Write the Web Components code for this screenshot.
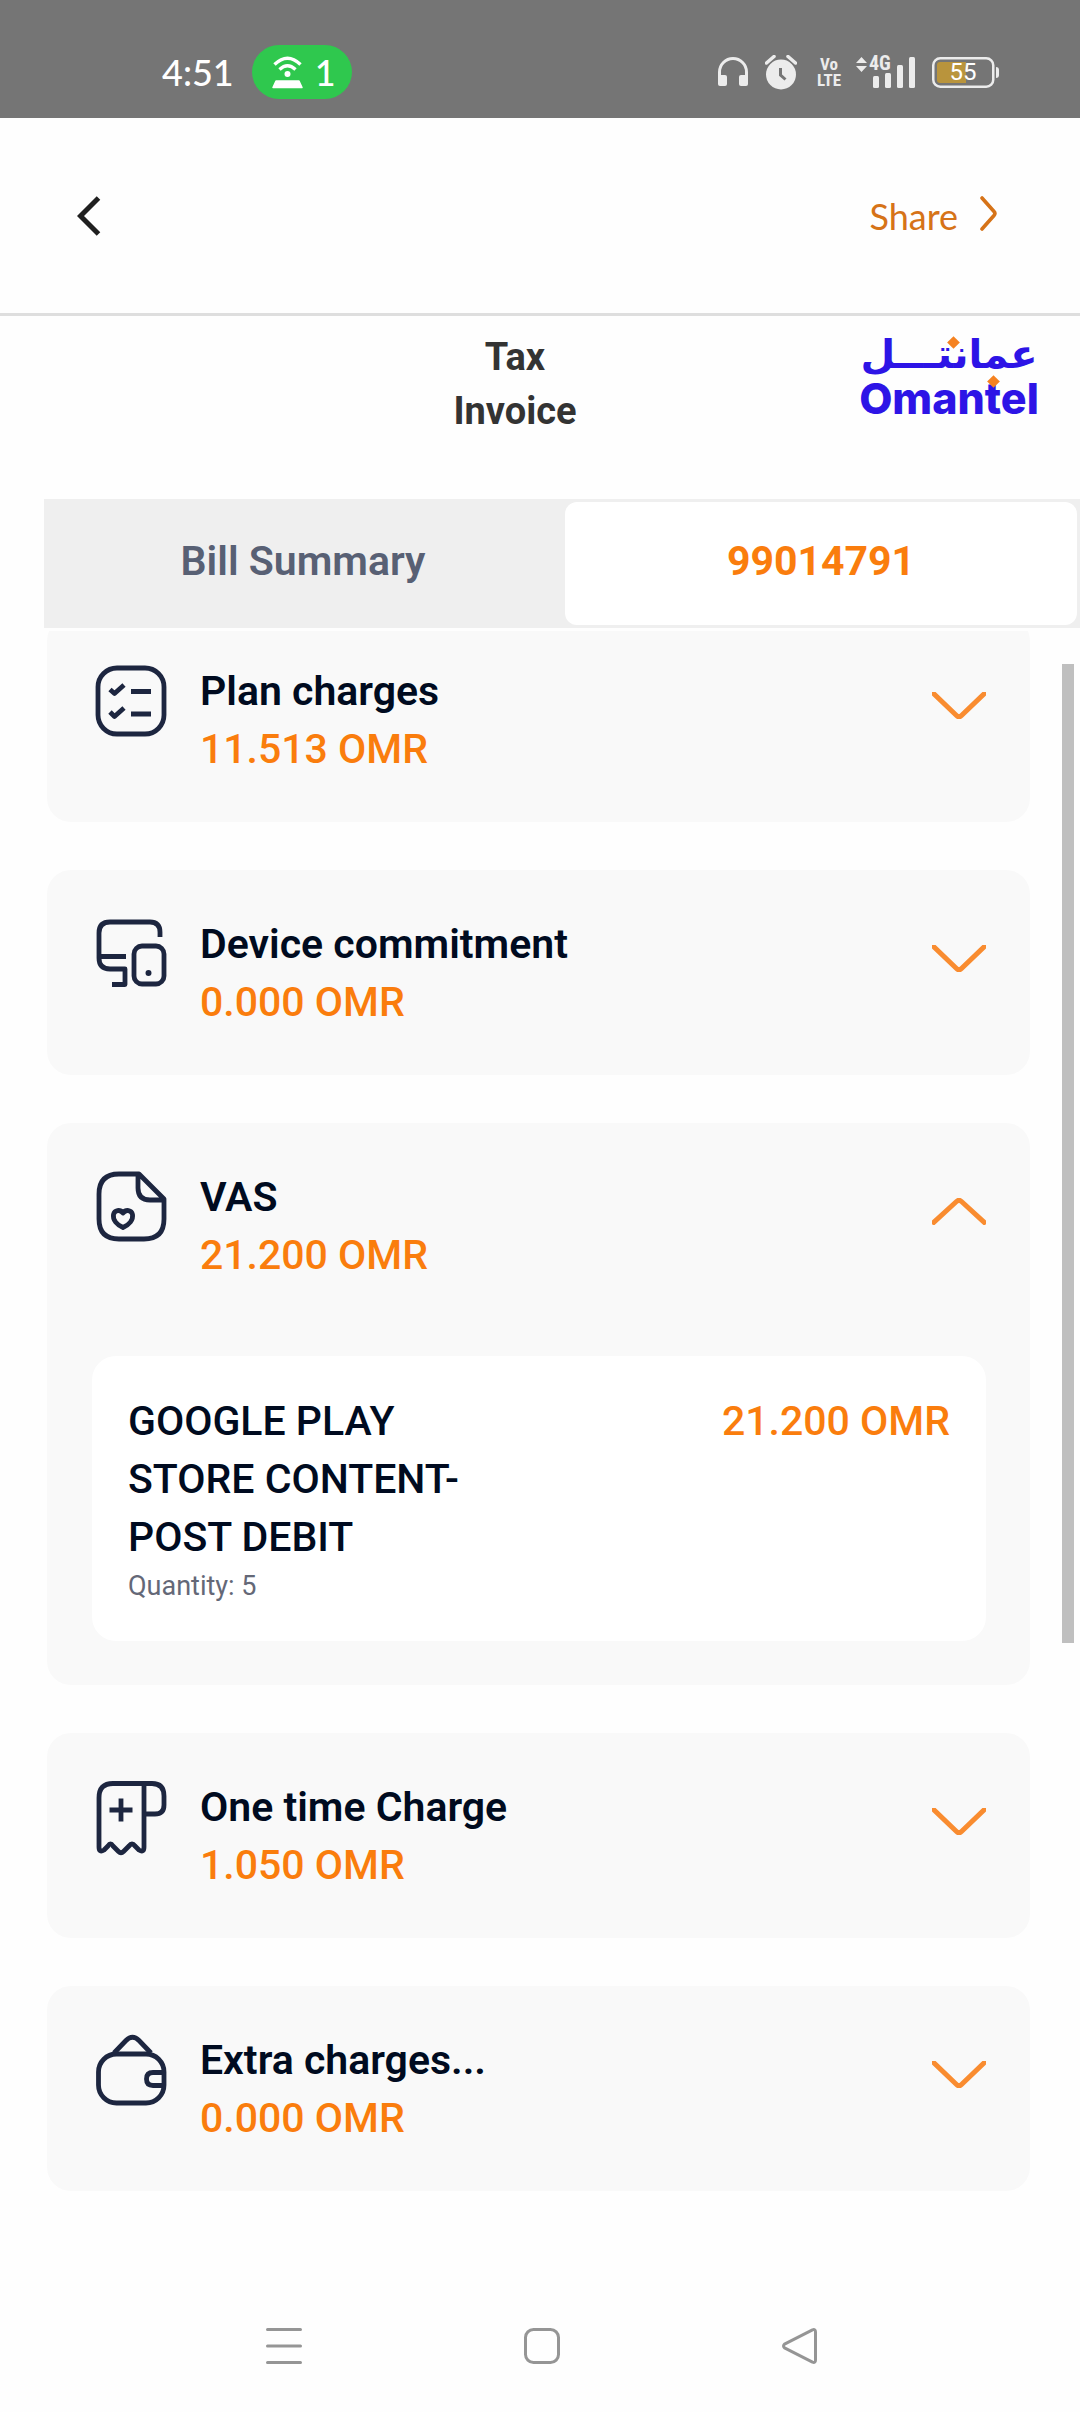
<!DOCTYPE html>
<html lang="en">
<head>
<meta charset="utf-8">
<meta name="viewport" content="width=device-width, initial-scale=1">
<title>Tax Invoice</title>
<style>
  html, body { margin: 0; height: 100%; }
  body {
    --accent: #fa7d0d;
    --ink: #000b20;
    --card: #f9f9f9;
    background: #fefefe;
    font-family: Roboto, "Liberation Sans", sans-serif;
  }
</style>
</head>
<body>
<invoice-app>
  <status-bar slot="status"></status-bar>
  <app-header slot="header"></app-header>
  <brand-heading slot="header"></brand-heading>
  <bill-tabs slot="header"></bill-tabs>
  <charge-card icon="plan" heading="Plan charges" amount="11.513 OMR"></charge-card>
  <charge-card icon="device" heading="Device commitment" amount="0.000 OMR"></charge-card>
  <charge-card icon="vas" heading="VAS" amount="21.200 OMR" open>
    <charge-item name="GOOGLE PLAY STORE CONTENT-POST DEBIT" amount="21.200 OMR" quantity="5"></charge-item>
  </charge-card>
  <charge-card icon="receipt" heading="One time Charge" amount="1.050 OMR"></charge-card>
  <charge-card icon="wallet" heading="Extra charges..." amount="0.000 OMR"></charge-card>
  <nav-bar slot="nav"></nav-bar>
</invoice-app>

<script>
const BASE = `
  :host, *, *::before { box-sizing: border-box; }
  button { margin: 0; padding: 0; border: 0; background: none; font: inherit; color: inherit; text-align: inherit; cursor: pointer; }
  svg { display: block; flex: none; }
`;
function define(name, render) {
  customElements.define(name, class extends HTMLElement {
    connectedCallback() {
      if (this.shadowRoot) return;
      const root = this.attachShadow({ mode: 'open' });
      const t = document.createElement('template');
      t.innerHTML = render(this);
      root.append(t.content.cloneNode(true));
    }
  });
}

define('invoice-app', () => `<style>${BASE}
  :host { display: flex; flex-direction: column; min-height: 100%; }
  .body { flex: 1; display: flex; margin-top: 3px; overflow: hidden; }
  main { flex: 1; display: flex; flex-direction: column; gap: 48px; margin: -14px 32px 0 47px; padding-bottom: 48px; }
  .track { width: 12px; margin-right: 6px; padding-top: 33px; }
  .thumb { height: 979px; background: #bfbfbf; }
</style>
<slot name="status"></slot>
<slot name="header"></slot>
<div class="body"><main><slot></slot></main><div class="track"><div class="thumb"></div></div></div>
<slot name="nav"></slot>`);

define('status-bar', () => `<style>${BASE}
  :host { display: flex; justify-content: space-between; align-items: center; height: 118px; padding: 26px 81px 0 162px; background: #757575; color: #fff; }
  .left, .right { display: flex; align-items: center; }
  .left { gap: 18px; font: 500 36px/54px Lato, sans-serif; }
  .pill { display: flex; align-items: center; gap: 12px; height: 54px; padding: 0 16px 0 20px; border-radius: 27px; background: #2fc84e; }
  .right { color: #ececec; }
  .head { margin-right: 17px; }
  .alarm { margin-right: 20px; }
  .volte { margin-right: 15px; font: bold 17px/16px "Liberation Sans Narrow", "Roboto Condensed", Roboto, sans-serif; text-align: center; }
  .sig { position: relative; margin-right: 16px; }
  .sig span { position: absolute; left: 13px; top: 0; font: bold 20px/15px "Liberation Sans Narrow", "Roboto Condensed", Roboto, sans-serif; }
  .bat { position: relative; }
  .bat span { position: absolute; left: 0; top: 0; width: 62px; text-align: center; font: 24px/31px Roboto, sans-serif; color: #fff; }
</style>
<div class="left"><span>4:51</span>
  <span class="pill">
    <svg width="31" height="33" viewBox="0 0 31 33" fill="none" stroke="#fff" stroke-width="3.4">
      <path d="M2.5 8.5Q15.500 -4 28.500 8.500M7.500 13.500Q15.500 6 23.500 13.500"/>
      <circle cx="15.500" cy="18" r="3" fill="#fff" stroke="none"/>
      <path d="M4 25H27L30 31.500H1Z" fill="#fff" stroke="#fff" stroke-width="1.500" stroke-linejoin="round"/>
    </svg><span>1</span></span>
</div>
<div class="right">
  <svg class="head" width="30" height="30" viewBox="0 0 30 30" fill="none" stroke="currentColor" stroke-width="3">
    <path d="M1.500 22V15A13.500 13.500 0 0 1 28.500 15V22"/><rect x="0" y="18" width="9" height="11" rx="2" fill="currentColor" stroke="none"/><rect x="21" y="18" width="9" height="11" rx="2" fill="currentColor" stroke="none"/>
  </svg>
  <svg class="alarm" width="32" height="35" viewBox="0 0 32 35">
    <circle cx="16" cy="19.500" r="15" fill="currentColor"/>
    <path d="M1.500 8L9 1.500M30.500 8L23 1.500" stroke="currentColor" stroke-width="3.500" stroke-linecap="round"/>
    <path d="M15.500 13V20L20.500 24.500" fill="none" stroke="#757575" stroke-width="3"/>
  </svg>
  <div class="volte">Vo<br>LTE</div>
  <div class="sig"><svg width="60" height="32" viewBox="0 0 60 32" fill="currentColor">
    <path d="M0 7L5.500 1L11 7ZM0 10H11L5.500 16Z"/>
    <rect x="17" y="20" width="6" height="12" rx="1.500"/><rect x="29" y="17" width="6" height="15" rx="1.500"/><rect x="41" y="9" width="6" height="23" rx="1.500"/><rect x="53" y="1" width="6" height="31" rx="1.500"/>
  </svg><span>4G</span></div>
  <div class="bat"><svg width="67" height="31" viewBox="0 0 67 31">
    <rect x="1.250" y="1.250" width="60" height="28.500" rx="7" fill="none" stroke="currentColor" stroke-width="2.500"/>
    <path d="M8 5H34V26H8Q5 26 5 23V8Q5 5 8 5Z" fill="#b9943c"/>
    <path d="M64 10Q67 10 67 13V18Q67 21 64 21Z" fill="currentColor"/>
  </svg><span>55</span></div>
</div>`);

define('app-header', () => `<style>${BASE}
  :host { display: flex; justify-content: space-between; align-items: center; height: 198px; padding: 0 83px 0 77px; border-bottom: 3px solid #dedede; }
  .share { display: flex; align-items: flex-start; gap: 22px; color: #d67318; font: 36px/40px Lato, sans-serif; }
</style>
<button aria-label="Back"><svg width="24" height="40" viewBox="0 0 24 40"><path d="M21.500 2L3.500 20L21.500 38" fill="none" stroke="#202020" stroke-width="5"/></svg></button>
<button class="share">Share<svg width="17" height="36" viewBox="0 0 17 36"><path d="M2 2L14 15.500Q15.800 17.500 14 19.500L2 33" fill="none" stroke="currentColor" stroke-width="3.600" stroke-linecap="round"/></svg></button>`);

define('brand-heading', () => `<style>${BASE}
  :host { display: flex; justify-content: space-between; padding: 14px 41px 61px 171px; }
  h1 { flex: 1; margin: 0; text-align: center; font-size: 38px; line-height: 54px; font-weight: 700; color: #333; }
  .logo { width: 180px; padding-top: 2px; color: #2d14e6; }
  .ar, .en { position: relative; white-space: nowrap; display: flex; justify-content: center; }
  .ar { font: bold 40px/44px "DejaVu Sans", sans-serif; height: 44px; direction: rtl; }
  .en { font: 800 43px/44px Inter, sans-serif; height: 44px; }
  i { position: absolute; width: 9px; height: 9px; background: #f58220; transform: rotate(45deg); }
  .ar i { left: 90px; top: 6px; }
  .en i { left: 130px; top: 1px; }
</style>
<h1>Tax<br>Invoice</h1>
<div class="logo"><div class="ar" lang="ar">عمانتـــل<i></i></div><div class="en">Omantel<i></i></div></div>`);

define('bill-tabs', () => `<style>${BASE}
  :host { display: grid; grid-template-columns: 1fr 1fr; height: 129px; margin-left: 44px; background: #efefef; }
  button { padding-bottom: 6px; text-align: center; font-size: 41px; line-height: 58px; font-weight: 600; color: #586074; }
  button[aria-selected=true] { margin: 3px; border-radius: 12px; background: #fff; color: var(--accent); font-weight: 700; }
</style>
<button role="tab" aria-selected="false">Bill Summary</button><button role="tab" aria-selected="true">99014791</button>`);

const ICONS = {
  plan: `<rect x="6" y="6" width="66" height="66" rx="19"/><path d="M18 27.500L22.500 31.500L32 23M18 50L22.500 54.500L32 46M39 29.500H59M39 52H59"/>`,
  device: `<path d="M68 22V17Q68 7 58 7H18Q7 7 7 18V43Q7 54 18 54H33V69.500H20M7 41.500H34"/><rect x="42" y="31" width="30" height="38" rx="8"/><circle cx="56.500" cy="58" r="2" fill="currentColor" stroke-width="2"/>`,
  vas: `<path d="M47 6H27Q7 6 7 26V51Q7 71 27 71H52Q72 71 72 51V31ZM46 6V20Q46 32 58 32H72"/><path d="M31 59.500C25 57 20.500 52 21.500 46.500C22.500 42 28 41 31 45C34 41 39.500 42 40.500 46.500C41.500 52 37 57 31 59.500Z"/>`,
  receipt: `<path d="M52 7V69Q52 75 47 72L43 68Q40 64 37 68L31.500 73.500Q29 76 26.500 73.500L21 68Q18.500 64 16 68L12 72Q7 75 7 69V20Q7 5.500 21 5.500H60Q72 5.500 72 18V27Q72 36 63 36H52M29 20.500V43.500M17.500 32H40.500"/>`,
  wallet: `<rect x="6.500" y="23" width="65.500" height="49" rx="18"/><path d="M22 22L34 9.500Q40.500 3 47 9.500L59 22M72 41.500H61Q54.500 41.500 54.500 48T61 54.500H72"/>`
};

define('charge-card', el => {
  const open = el.hasAttribute('open');
  const chevron = open ? 'M0 26L24.500 3.500Q27 1.200 29.500 3.500L54 26' : 'M0 0L24.500 23.500Q27 26 29.500 23.500L54 0';
  return `<style>${BASE}
  :host { display: block; padding: 45px 44px 44px 45px; border-radius: 24px; background: var(--card); }
  button { display: flex; align-items: flex-start; width: 100%; font-size: 41px; line-height: 58px; font-weight: 600; }
  .icon { margin-right: 30px; color: #1d2640; }
  .text { flex: 1; display: flex; flex-direction: column; }
  .name { color: var(--ink); }
  .sum { color: var(--accent); font-weight: 500; }
  .chev { padding-top: 30px; color: #f98c30; }
  .detail { padding-top: 72px; }
  :host(:not([open])) .detail { display: none; }
</style>
<button aria-expanded="${open}">
  <svg class="icon" width="78" height="78" viewBox="0 0 78 78" fill="none" stroke="currentColor" stroke-width="4.800" stroke-linejoin="round">${ICONS[el.getAttribute('icon')]}</svg>
  <span class="text"><span class="name">${el.getAttribute('heading')}</span><span class="sum">${el.getAttribute('amount')}</span></span>
  <span class="chev"><svg width="54" height="27" viewBox="0 0 54 27"><path d="${chevron}" fill="none" stroke="currentColor" stroke-width="5"/></svg></span>
</button>
<div class="detail"><slot></slot></div>`;
});

define('charge-item', el => `<style>${BASE}
  :host { display: flex; justify-content: space-between; padding: 36px 36px 35px; border-radius: 24px; background: #fff; font-size: 41px; line-height: 58px; font-weight: 500; }
  .info { flex: 0 0 45%; color: var(--ink); }
  .qty { font-size: 27px; line-height: 40px; font-weight: 400; color: #646877; }
  .sum { color: var(--accent); }
</style>
<div class="info"><div>${el.getAttribute('name')}</div><div class="qty">Quantity: ${el.getAttribute('quantity')}</div></div>
<div class="sum">${el.getAttribute('amount')}</div>`);

define('nav-bar', () => `<style>${BASE}
  :host { display: flex; justify-content: center; align-items: center; gap: 222px; height: 132px; padding-left: 4px; }
  svg { fill: none; stroke: #959595; stroke-width: 3; stroke-linecap: round; stroke-linejoin: round; }
</style>
<button aria-label="Recent apps"><svg width="36" height="36" viewBox="0 0 36 36"><path d="M1.500 1.500H34.500M1.500 18H34.500M1.500 34.500H34.500"/></svg></button>
<button aria-label="Home"><svg width="36" height="36" viewBox="0 0 36 36"><rect x="1.500" y="1.500" width="33" height="33" rx="8"/></svg></button>
<button aria-label="Back"><svg width="36" height="36" viewBox="0 0 36 36"><path d="M2.500 16.200L30.500 1.800Q33.500 .8 33.500 4V32Q33.500 35.200 30.500 34.200L2.500 19.800Q.5 18 2.500 16.200Z"/></svg></button>`);
</script>
</body>
</html>
